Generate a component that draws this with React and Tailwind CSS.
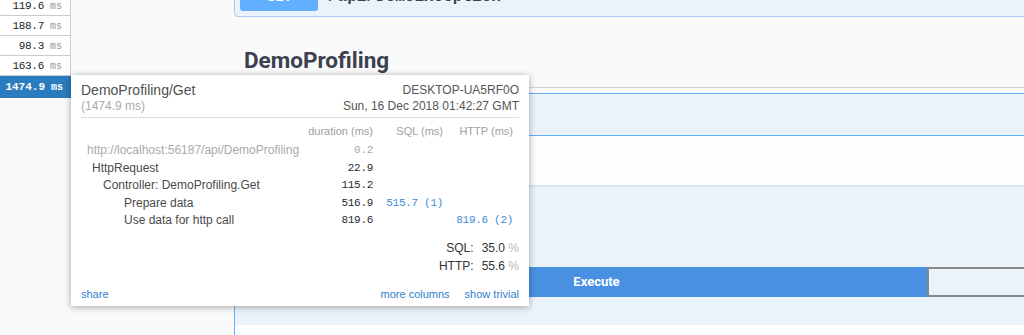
import React from "react";

const sideRows = ["119.6", "188.7", "98.3", "163.6"];

const traceRows = [
  { name: "http://localhost:56187/api/DemoProfiling", pad: "pl-[6px]", dur: "0.2", muted: true },
  { name: "HttpRequest", pad: "pl-[11px]", dur: "22.9" },
  { name: "Controller: DemoProfiling.Get", pad: "pl-[22px]", dur: "115.2" },
  { name: "Prepare data", pad: "pl-[43px]", dur: "516.9", sql: "515.7 (1)" },
  { name: "Use data for http call", pad: "pl-[43px]", dur: "819.6", http: "819.6 (2)" },
];

const sans = "font-['Liberation_Sans',Arial,sans-serif]";
const mono = "font-['Liberation_Mono','Courier_New',monospace]";

function SideColumn() {
  return (
    <div className="absolute left-0 top-[-4px] w-[71px]">
      {sideRows.map((v) => (
        <div
          key={v}
          className={`h-[20px] bg-white border-r border-b border-[#cccccc] flex items-center justify-end pr-[8px] pt-[1px] ${mono} text-[11px] text-[#222]`}
        >
          <span className="tracking-[-0.3px]">{v}</span>
          <span className="ml-[6px] text-[10px] text-[#999]">ms</span>
        </div>
      ))}
      <div
        className={`h-[22px] bg-[#2b7bbf] flex items-center justify-end pr-[8px] ${mono} text-[11px] font-bold text-white`}
      >
        <span>1474.9</span>
        <span className="ml-[6px] text-[10px]">ms</span>
      </div>
    </div>
  );
}

function Popup() {
  return (
    <div
      className={`absolute left-[71px] top-[75px] w-[458px] bg-white px-[10px] pt-[7px] pb-[5px] shadow-[0_1px_7px_rgba(0,0,0,0.35)] ${sans}`}
    >
      <div className="flex justify-between border-b border-[#dddddd] pb-[3px]">
        <div>
          <div className="text-[14px] leading-[16px] text-[#505050]">DemoProfiling/Get</div>
          <div className="text-[12px] leading-[16px] text-[#aaa]">(1474.9 ms)</div>
        </div>
        <div className="text-right text-[12px] leading-[16px] text-[#555]">
          <div>DESKTOP-UA5RF0O</div>
          <div>Sun, 16 Dec 2018 01:42:27 GMT</div>
        </div>
      </div>

      <div className="grid grid-cols-[222px_70px_70px_70px] mt-[6px] h-[14px] text-[11px] leading-[14px] text-[#a0a0a0]">
        <div />
        <div className="text-right">duration (ms)</div>
        <div className="text-right">SQL (ms)</div>
        <div className="text-right">HTTP (ms)</div>
      </div>

      <div className="mt-[4px]">
        {traceRows.map((r) => (
          <div
            key={r.name}
            className="grid grid-cols-[222px_70px_70px_70px] h-[17.6px] leading-[17.6px] text-[12px]"
          >
            <div className={`${r.pad} whitespace-nowrap ${r.muted ? "text-[#aaa]" : "text-[#4a4a4a]"}`}>
              {r.name}
            </div>
            <div
              className={`text-right ${mono} text-[11px] tracking-[-0.3px] ${r.muted ? "text-[#aaa]" : "text-[#2a2a2a]"}`}
            >
              {r.dur}
            </div>
            <div className={`text-right ${mono} text-[11px] tracking-[-0.3px] text-[#3d8bd4] whitespace-nowrap`}>
              {r.sql || ""}
            </div>
            <div className={`text-right ${mono} text-[11px] tracking-[-0.3px] text-[#3d8bd4] whitespace-nowrap`}>
              {r.http || ""}
            </div>
          </div>
        ))}
      </div>

      <div className="mt-[10px] text-[12px]">
        <div className="flex justify-end h-[17.7px] leading-[17.7px]">
          <span className="text-[#333]">SQL:</span>
          <span className="ml-[8px] text-[#333]">35.0</span>
          <span className="text-[#bbb]">&nbsp;%</span>
        </div>
        <div className="flex justify-end h-[17.7px] leading-[17.7px]">
          <span className="text-[#333]">HTTP:</span>
          <span className="ml-[8px] text-[#333]">55.6</span>
          <span className="text-[#bbb]">&nbsp;%</span>
        </div>
      </div>

      <div className="mt-[12px] flex h-[14px] text-[11px] leading-[14px] text-[#2e7fcc]">
        <span>share</span>
        <span className="ml-auto">more columns</span>
        <span className="ml-[15px]">show trivial</span>
      </div>
    </div>
  );
}

function MainContent() {
  const roboto = "font-['Roboto',sans-serif]";
  return (
    <div className="ml-[234px] w-[1386px]">
      {/* collapsed opblock (DemoException) */}
      <div className="mt-[-24px] h-[41px] border border-[#a3cbf5] rounded-[4px] bg-[rgba(97,175,254,0.1)] flex items-center pl-[5px]">
        <div className={`w-[78px] h-[29px] rounded-[3px] bg-[#61affe] text-white text-[14px] font-bold flex items-center justify-center ${roboto}`}>
          GET
        </div>
        <div className={`ml-[10px] ${mono} text-[16px] font-bold text-[#3b4151]`}>/api/DemoException</div>
      </div>

      {/* tag heading */}
      <div className="mt-[19px] pt-[10px] pl-[10px] pb-[12px] border-b border-[#d0d2d6]">
        <h4 className={`${roboto} font-bold text-[22.5px] leading-[29px] text-[#3b4151]`}>DemoProfiling</h4>
      </div>

      {/* expanded opblock */}
      <div className="mt-[5px] border border-[#61affe] rounded-[4px] bg-[rgba(97,175,254,0.1)] overflow-hidden">
        <div className="h-[42px] border-b border-[#61affe] flex items-center pl-[5px]">
          <div className={`w-[78px] h-[29px] rounded-[3px] bg-[#61affe] text-white text-[14px] font-bold flex items-center justify-center ${roboto}`}>
            GET
          </div>
          <div className={`ml-[10px] ${mono} text-[16px] font-bold text-[#3b4151]`}>/api/DemoProfiling</div>
        </div>
        <div className={`h-[49px] bg-[rgba(255,255,255,0.8)] shadow-[0_1px_2px_rgba(0,0,0,0.1)] flex items-center px-[20px] ${roboto} text-[14px] font-bold text-[#3b4151]`}>
          Parameters
        </div>
        <div className={`h-[52px] px-[20px] flex items-center ${roboto} text-[14px] text-[#3b4151]`}>No parameters</div>
        <div className="grid grid-cols-2 px-[31px] pt-[30px] pb-[28px]">
          <div className={`h-[30px] bg-[#4990e2] rounded-l-[4px] flex items-center justify-center text-white text-[13px] font-bold ${roboto}`}>
            Execute
          </div>
          <div className={`h-[30px] border-2 border-[#888] rounded-r-[4px] flex items-center justify-center text-[#3b4151] text-[13px] font-bold ${roboto}`}>
            Clear
          </div>
        </div>
        <div className="h-[49px] bg-[rgba(255,255,255,0.8)] shadow-[0_1px_2px_rgba(0,0,0,0.1)]" />
      </div>
    </div>
  );
}

export default function App() {
  return (
    <div className="relative w-[1024px] h-[335px] overflow-hidden bg-[#fafafa]">
      <MainContent />
      <SideColumn />
      <Popup />
    </div>
  );
}
